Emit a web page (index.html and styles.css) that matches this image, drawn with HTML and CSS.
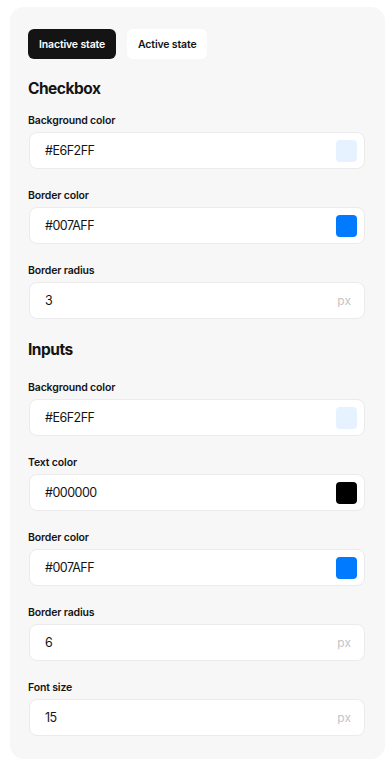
FILE: index.html
```html
<!DOCTYPE html>
<html>
<head>
<meta charset="utf-8">
<link rel="stylesheet" href="styles.css">
</head>
<body>
<div class="card">
  <div class="tabs">
    <button class="tab tab-dark">Inactive state</button>
    <button class="tab tab-light">Active state</button>
  </div>

  <h2 class="heading">Checkbox</h2>
  <div class="fields">
    <div class="field">
      <div class="label">Background color</div>
      <div class="input"><span class="value">#E6F2FF</span><span class="swatch swatch-light"></span></div>
    </div>
    <div class="field">
      <div class="label">Border color</div>
      <div class="input"><span class="value">#007AFF</span><span class="swatch swatch-blue"></span></div>
    </div>
    <div class="field">
      <div class="label">Border radius</div>
      <div class="input"><span class="value">3</span><span class="unit">px</span></div>
    </div>
  </div>

  <h2 class="heading heading-2">Inputs</h2>
  <div class="fields">
    <div class="field">
      <div class="label">Background color</div>
      <div class="input"><span class="value">#E6F2FF</span><span class="swatch swatch-light"></span></div>
    </div>
    <div class="field">
      <div class="label">Text color</div>
      <div class="input"><span class="value">#000000</span><span class="swatch swatch-black"></span></div>
    </div>
    <div class="field">
      <div class="label">Border color</div>
      <div class="input"><span class="value">#007AFF</span><span class="swatch swatch-blue"></span></div>
    </div>
    <div class="field">
      <div class="label">Border radius</div>
      <div class="input"><span class="value">6</span><span class="unit">px</span></div>
    </div>
    <div class="field">
      <div class="label">Font size</div>
      <div class="input"><span class="value">15</span><span class="unit">px</span></div>
    </div>
  </div>
</div>
</body>
</html>
```

FILE: styles.css
```css
* { box-sizing: border-box; }
html, body { margin: 0; padding: 0; background: #ffffff; }
body {
  font-family: Inter, "Liberation Sans", sans-serif;
  color: #141414;
  padding: 7px 7px 0 10px;
}
.card {
  background: #f7f7f7;
  border-radius: 14px;
  padding: 22px 20px 23px 18px;
}
.tabs {
  display: flex;
  gap: 11px;
}
.tab {
  font-family: inherit;
  font-size: 10.5px;
  font-weight: 600;
  height: 30px;
  border: none;
  border-radius: 6px;
  padding: 0 11px;
  margin: 0;
  letter-spacing: -0.15px;
}
.tab-dark { background: #141414; color: #ffffff; }
.tab-light { background: #ffffff; color: #141414; }
.heading {
  margin: 20px 0 15px 0;
  font-size: 15.5px;
  line-height: 20px;
  font-weight: 700;
  letter-spacing: -0.5px;
}
.heading-2 { margin-top: 21px; margin-bottom: 21px; }
.fields {
  display: flex;
  flex-direction: column;
  gap: 20px;
}
.field {
  display: flex;
  flex-direction: column;
  gap: 5px;
}
.label {
  font-size: 10.5px;
  line-height: 13px;
  font-weight: 600;
  letter-spacing: -0.15px;
}
.input {
  height: 37px;
  background: #ffffff;
  border: 1px solid #ebebeb;
  border-radius: 8px;
  display: flex;
  align-items: center;
  justify-content: space-between;
  padding: 0 7px 0 15px;
  margin-left: 1px;
}
.value {
  font-size: 12.5px;
  letter-spacing: -0.5px;
  color: #141414;
}
.swatch {
  width: 21px;
  height: 22px;
  border-radius: 4px;
}
.swatch-light { background: #e6f2ff; }
.swatch-blue { background: #007aff; }
.swatch-black { background: #000000; }
.unit {
  font-size: 12px;
  color: #c4c4c4;
  padding-right: 6px;
}
```
